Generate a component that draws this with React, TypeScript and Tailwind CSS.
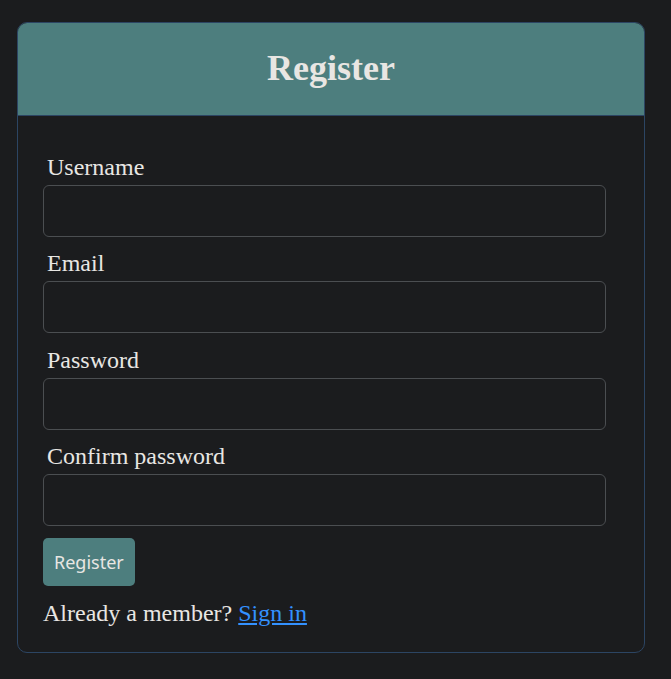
const fields = [
  { id: 'username', label: 'Username', type: 'text' },
  { id: 'email', label: 'Email', type: 'email' },
  { id: 'password', label: 'Password', type: 'password' },
  { id: 'confirm', label: 'Confirm password', type: 'password' },
];

export default function App() {
  return (
    <div className="min-h-screen bg-[#1b1c1e] pt-[22px] pl-[17px] pr-[26px] font-['Liberation_Serif',serif] text-[#e8e6e3]">
      <div className="w-[628px] overflow-hidden rounded-[10px] border border-[#2c4563]">
        <div className="border-b border-[#2c4563] bg-[#4d7e7e] pt-[18px] pb-[20px] text-center">
          <h1 className="text-[36px] leading-[54px] font-bold">Register</h1>
        </div>
        <form className="pt-[33px] pr-[38px] pb-[21px] pl-[25px]" onSubmit={(e) => e.preventDefault()}>
          {fields.map((f) => (
            <div key={f.id} className="mb-[8.3px]">
              <label htmlFor={f.id} className="block pl-1 text-[24px] leading-[36px]">
                {f.label}
              </label>
              <input
                id={f.id}
                type={f.type}
                className="block h-[52px] w-full rounded-[6px] border border-[#4b4e51] bg-[#1b1c1e] px-3 text-[20px] text-[#e8e6e3] outline-none"
              />
            </div>
          ))}
          <button
            type="submit"
            className="mt-[3.8px] rounded-[5px] bg-[#4d7e7e] px-[11px] py-[10px] font-['Noto_Sans',sans-serif] text-[18px] leading-[28px] text-[#e8e6e3]"
          >
            Register
          </button>
          <p className="mt-[9px] text-[24px] leading-[36px]">
            Already a member?{' '}
            <a href="#" className="text-[#3391ff] underline">
              Sign in
            </a>
          </p>
        </form>
      </div>
    </div>
  );
}
